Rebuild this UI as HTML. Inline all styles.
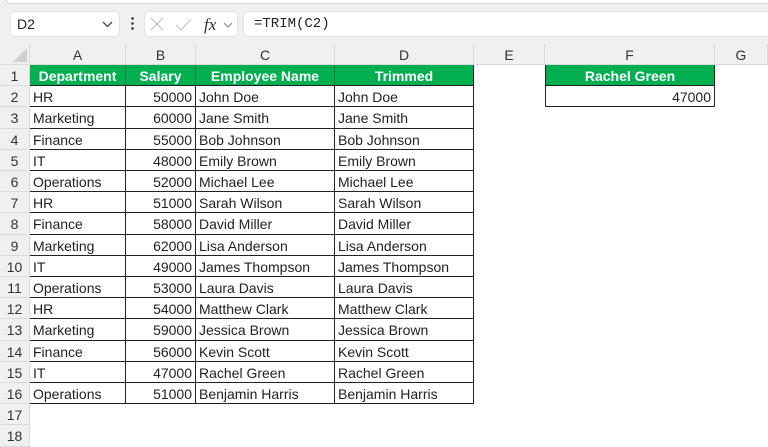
<!DOCTYPE html>
<html><head><style>
*{box-sizing:border-box;margin:0;padding:0}
body{width:768px;height:443px;overflow:hidden;background:#fff;font-family:"Liberation Sans",sans-serif;position:relative}
.top{position:absolute;left:0;top:0;width:768px;height:44px;background:#f0f0f0}
.top .strip{position:absolute;left:6px;top:0;width:762px;height:4px;background:#fff;border-bottom:1px solid #d8d8d8;border-left:1px solid #d8d8d8;border-bottom-left-radius:4px}
.box{position:absolute;top:11px;height:26px;background:#fff;border:1px solid #e2e2e2;border-radius:4px;font-size:14px;color:#222;line-height:24px}
.r{position:absolute;left:0;width:768px;height:21.2px;display:flex;font-size:14px;line-height:22px;color:#222}
.c{height:100%;white-space:nowrap;overflow:hidden;padding:0 3px}
.h{background:#f0f0f0;text-align:center;color:#333;border-right:1px solid #dadada;border-bottom:1px solid #dadada}
.d{border-right:1px solid #222;border-bottom:1px solid #222}
.g{background:#00b050;color:#fff;font-weight:bold;text-align:center;border-bottom:1px solid #222}
.n{text-align:right}
.w0{width:30px}.wA{width:96px}.wB{width:70px}.wC{width:139px}.wD{width:139px}.wE{width:71px}.wF{width:170px}.wG{width:53px}
</style></head><body>
<div class="top"><div class="strip"></div>
<div class="box" style="left:10px;width:110px;padding-left:6px">D2<svg style="position:absolute;right:6px;top:9px" width="11" height="7"><path d="M1 1l4.5 4.5L10 1" stroke="#444" fill="none" stroke-width="1.3"/></svg></div>
<div style="position:absolute;left:131px;top:16px;width:3px;height:15px;background:radial-gradient(circle,#444 1.2px,transparent 1.5px) 0 0/3px 5px"></div>
<div class="box" style="left:144px;width:94px"><svg width="94" height="24"><path d="M6 6l12 12M18 6L6 18" stroke="#c8c8c8" stroke-width="1.3"/><path d="M31 13l5 5 10-11" stroke="#c8c8c8" stroke-width="1.3" fill="none"/><text x="59" y="18" font-family="Liberation Serif,serif" font-style="italic" font-size="17" fill="#333">fx</text><path d="M79 11l4 4 4-4" stroke="#888" fill="none" stroke-width="1.1"/></svg></div>
<div class="box" style="left:243px;width:530px;padding-left:10px;font-family:'Liberation Mono',monospace;font-size:14px">=TRIM(C2)</div>
</div>
<div class="r" style="top:44px;height:21px"><div class="c h w0" style="position:relative"><svg style="position:absolute;right:2px;bottom:2px" width="14" height="14"><path d="M14 0V14H0z" fill="#cfcfcf"/></svg></div><div class="c h wA">A</div><div class="c h wB">B</div><div class="c h wC">C</div><div class="c h wD">D</div><div class="c h wE">E</div><div class="c h wF">F</div><div class="c h wG">G</div></div>
<div id="rows"></div>
<script>
var data=[["HR",50000,"John Doe"],["Marketing",60000,"Jane Smith"],["Finance",55000,"Bob Johnson"],["IT",48000,"Emily Brown"],["Operations",52000,"Michael Lee"],["HR",51000,"Sarah Wilson"],["Finance",58000,"David Miller"],["Marketing",62000,"Lisa Anderson"],["IT",49000,"James Thompson"],["Operations",53000,"Laura Davis"],["HR",54000,"Matthew Clark"],["Marketing",59000,"Jessica Brown"],["Finance",56000,"Kevin Scott"],["IT",47000,"Rachel Green"],["Operations",51000,"Benjamin Harris"]];
var h="";
function row(i,inner){return '<div class="r" style="top:'+(65+(i-1)*21.2)+'px"><div class="c h w0">'+i+'</div>'+inner+'</div>';}
h+=row(1,'<div class="c g wA" style="border-left:0;border-right:1px solid #1a7a3a">Department</div><div class="c g wB" style="border-right:1px solid #1a7a3a">Salary</div><div class="c g wC" style="border-right:1px solid #1a7a3a">Employee Name</div><div class="c g wD" style="border-right:1px solid #222">Trimmed</div><div class="c wE"></div><div class="c g wF" style="border-left:1px solid #222;border-right:1px solid #222">Rachel Green</div>');
for(var k=0;k<data.length;k++){var d=data[k];var ex=k==0?'<div class="c wE"></div><div class="c d wF n" style="border-left:1px solid #222">47000</div>':'';
h+=row(k+2,'<div class="c d wA">'+d[0]+'</div><div class="c d wB n">'+d[1]+'</div><div class="c d wC">'+d[2]+'</div><div class="c d wD">'+d[2]+'</div>'+ex);}
h+=row(17,'');h+=row(18,'');
document.getElementById("rows").innerHTML=h;
</script>
</body></html>
